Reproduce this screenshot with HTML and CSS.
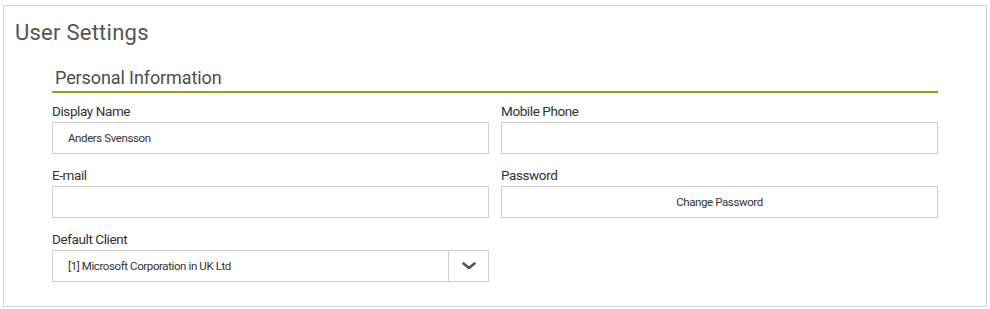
FILE: index.html
```html
<!DOCTYPE html>
<html>

<head>
    <meta charset="UTF-8">
    <title>User Settings</title>
    <link rel="stylesheet" href="styles.css">
</head>

<body>
    <div class="panel">
        <h1 class="panel-title">User Settings</h1>

        <div class="section">
            <h2 class="section-title">Personal Information</h2>

            <div class="form-grid">
                <div class="field">
                    <label>Display Name</label>
                    <input class="text-input" type="text" value="Anders Svensson">
                </div>
                <div class="field">
                    <label>Mobile Phone</label>
                    <input class="text-input" type="text" value="">
                </div>
                <div class="field">
                    <label>E-mail</label>
                    <input class="text-input" type="text" value="">
                </div>
                <div class="field">
                    <label>Password</label>
                    <button class="change-btn">Change Password</button>
                </div>
                <div class="field">
                    <label>Default Client</label>
                    <div class="select">
                        <span class="select-value">[1] Microsoft Corporation in UK Ltd</span>
                        <span class="select-arrow">
                            <svg width="14" height="8" viewBox="0 0 14 8">
                                <polyline points="1.5,1.5 7,6 12.5,1.5" fill="none" stroke="#555" stroke-width="2.6" stroke-linecap="round" stroke-linejoin="round"/>
                            </svg>
                        </span>
                    </div>
                </div>
            </div>
        </div>
    </div>
</body>

</html>
```

FILE: styles.css
```css
body {
    font-family: 'Roboto', sans-serif;
    margin: 0;
    padding: 0;
    color: #333;
    background: #fff;
}

.panel {
    margin: 5px 3px 2px 3px;
    border: 1px solid #d4d4d4;
    padding: 14px 0 11px 0;
}

.panel-title {
    font-size: 22px;
    font-weight: 400;
    line-height: 26px;
    color: #555;
    margin: 0;
    padding-left: 11px;
    letter-spacing: 0.25px;
}

.section {
    margin: 21px 48px 0 48px;
}

.section-title {
    font-size: 18px;
    font-weight: 400;
    line-height: 22px;
    color: #4d4d4d;
    margin: 0 0 10px 0;
    padding: 0 0 2px 3px;
    border-bottom: 2px solid #8fa31c;
    letter-spacing: -0.1px;
}

.form-grid {
    display: grid;
    grid-template-columns: 1fr 1fr;
    column-gap: 12px;
}

.field {
    display: flex;
    flex-direction: column;
    margin-bottom: 13px;
}

.field label {
    font-size: 13.5px;
    line-height: 16px;
    color: #333;
    margin-bottom: 3px;
    letter-spacing: -0.4px;
    padding-top: 1px;
    margin-top: -1px;
}

.text-input {
    box-sizing: border-box;
    height: 32px;
    border: 1px solid #cfcfcf;
    padding: 0 15px;
    font-family: 'Roboto', sans-serif;
    font-size: 11.5px;
    color: #333;
    outline: none;
    margin: 0;
    letter-spacing: -0.4px;
}

.change-btn {
    box-sizing: border-box;
    height: 32px;
    border: 1px solid #cfcfcf;
    background: #fff;
    font-family: 'Roboto', sans-serif;
    font-size: 11.5px;
    color: #333;
    margin: 0;
    cursor: pointer;
    letter-spacing: -0.4px;
}

.select {
    box-sizing: border-box;
    height: 32px;
    border: 1px solid #cfcfcf;
    display: flex;
    align-items: stretch;
}

.select-value {
    flex: 1;
    display: flex;
    align-items: center;
    padding-left: 15px;
    font-size: 11.5px;
    color: #333;
    letter-spacing: -0.4px;
}

.select-arrow {
    width: 39px;
    border-left: 1px solid #cfcfcf;
    display: flex;
    align-items: center;
    justify-content: center;
}
```
